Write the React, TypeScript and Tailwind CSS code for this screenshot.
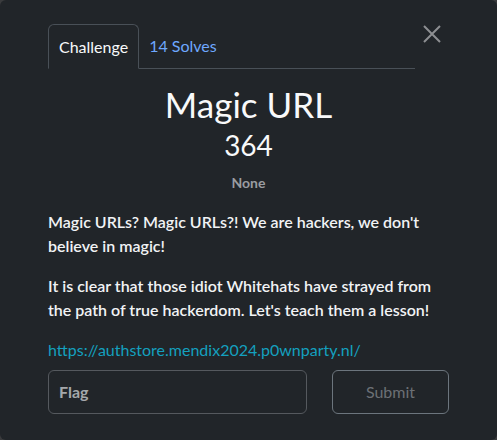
import React from 'react';

const App: React.FC = () => {
    return (
        <div className="w-[497px] h-[440px] bg-[#3a3b3d]" style={{ fontFamily: 'Lato, "Open Sans", sans-serif' }}>
            <div className="h-full w-full rounded-[6px] bg-[#212529] px-12 pt-6 text-[#dee2e6]">
                {/* tabs + close */}
                <div className="flex flex-row items-start">
                    <ul className="flex flex-row w-[367px] border-b border-[#495057]">
                        <li className="-mb-px h-[45px] px-[10px] flex items-center rounded-t-[6px] border border-[#495057] border-b-[#212529] bg-[#212529] text-[16px] text-[#f8f9fa]">
                            Challenge
                        </li>
                        <li className="h-[44px] px-[10px] flex items-center text-[16px] text-[#6ea8fe]">
                            14 Solves
                        </li>
                    </ul>
                    <button className="ml-auto mt-[1px] mr-[8px] text-[#8d8f92]">
                        <svg width="18" height="18" viewBox="0 0 18 18" fill="none" stroke="currentColor" strokeWidth="2">
                            <path d="M1 1 L17 17 M17 1 L1 17" />
                        </svg>
                    </button>
                </div>

                <div className="flex flex-col items-center">
                    <h2 className="mt-[14px] text-[35px] leading-[1.2] text-[#f8f9fa]">Magic URL</h2>
                    <h3 className="mt-[4px] text-[28px] leading-[1.2] text-[#f8f9fa]">364</h3>
                    <span className="mt-[9px] text-[14px] font-bold text-[#9a9da1]">None</span>
                </div>

                <div className="mt-[17px] text-[16px] leading-[24px] font-semibold text-[#f1f3f5]">
                    <p>Magic URLs? Magic URLs?! We are hackers, we don't believe in magic!</p>
                    <p className="mt-[16px]">It is clear that those idiot Whitehats have strayed from the path of true hackerdom. Let's teach them a lesson!</p>
                    <p className="mt-[16px]">
                        <a href="#" className="font-normal text-[#14a0bf]">https://authstore.mendix2024.p0wnparty.nl/</a>
                    </p>
                </div>

                <div className="mt-[8px] flex flex-row gap-[25px]">
                    <input
                        placeholder="Flag"
                        className="w-[259px] h-[44px] rounded-[6px] border border-[#55595e] bg-[#212529] px-[10px] text-[16px] font-bold placeholder:text-[#a5a8ab] outline-none"
                    />
                    <button className="w-[117px] h-[44px] rounded-[6px] border border-[#6c757d] text-[16px] text-[#6c7075]">
                        Submit
                    </button>
                </div>
            </div>
        </div>
    );
};

export default App;
